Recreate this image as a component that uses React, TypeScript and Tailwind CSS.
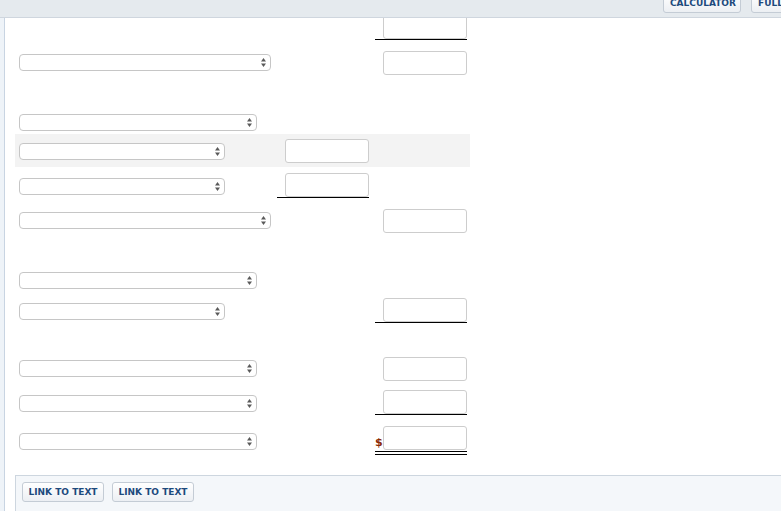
const font = { fontFamily: '"DejaVu Sans", Verdana, sans-serif' }

function Arrows() {
    return (
        <svg width="5" height="9" viewBox="0 0 5 9" className="shrink-0">
            <polygon points="2.5,0 5,3.5 0,3.5" fill="#5a5a5a" />
            <polygon points="0,5.5 5,5.5 2.5,9" fill="#5a5a5a" />
        </svg>
    )
}

function Select({ w, mt }: { w: string; mt: string }) {
    return (
        <div className={`${w} ${mt} h-[17px] flex items-center justify-end pr-[4px] bg-white border border-[#c6c6c6] rounded-[4px]`}>
            <Arrows />
        </div>
    )
}

function Field() {
    return <input type="text" className="w-[84px] h-[24px] bg-white border border-[#cdcdcd] rounded-[3px]" />
}

type Cell = "none" | "plain" | "line" | "total"

function Amount({ kind }: { kind: Cell }) {
    if (kind === "none") return <div className="w-[92px]" />
    if (kind === "plain")
        return (
            <div className="w-[92px] flex justify-end">
                <Field />
            </div>
        )
    if (kind === "line")
        return (
            <div className="w-[92px] flex justify-end border-b border-black">
                <Field />
            </div>
        )
    return (
        <div className="w-[92px] flex flex-col">
            <div className="flex items-end justify-between">
                <span className="text-[11px] leading-[12px] font-bold text-[#8a2a05] mb-[1px]" style={font}>$</span>
                <Field />
            </div>
            <div className="mt-[1px] h-[4px] border-y border-black" />
        </div>
    )
}

function Row({
    sel,
    selMt = "mt-0",
    mid = "none",
    right = "none",
    className = "",
}: {
    sel?: string
    selMt?: string
    mid?: Cell
    right?: Cell
    className?: string
}) {
    return (
        <div className={`flex items-start pl-[4px] ${className}`}>
            <div className="w-[258px]">{sel && <Select w={sel} mt={selMt} />}</div>
            <Amount kind={mid} />
            <div className="w-[6px]" />
            <Amount kind={right} />
        </div>
    )
}

function LinkButton({ label }: { label: string }) {
    return (
        <button
            className="w-[82px] h-[20px] shrink-0 flex items-center justify-center whitespace-nowrap rounded-[3px] border border-[#c4ccd5] bg-gradient-to-b from-white to-[#eceff3] text-[9px] font-bold text-[#1d4a7d] leading-none"
            style={font}
        >
            {label}
        </button>
    )
}

function ToolButton({ label, w }: { label: string; w: string }) {
    return (
        <button
            className={`${w} h-[20px] shrink-0 flex items-end justify-start pl-[6px] pb-[4px] whitespace-nowrap rounded-[3px] border border-[#c4ccd5] bg-gradient-to-b from-white to-[#eceff3] text-[9px] font-bold text-[#1d4a7d] leading-[9px]`}
            style={font}
        >
            {label}
        </button>
    )
}

export default function App() {
    return (
        <div className="w-[781px] h-[511px] overflow-hidden bg-white flex flex-col">
            {/* Toolbar, scrolled so only the lower half shows */}
            <div className="h-[18px] shrink-0 bg-[#e5eaee] border-b border-[#cfd6de] flex items-end gap-[10px] pl-[663px] pb-[4px] overflow-hidden">
                <ToolButton label="CALCULATOR" w="w-[78px]" />
                <ToolButton label="FULL SCREEN" w="w-[90px]" />
            </div>

            <div className="flex flex-1 min-h-0">
                <div className="w-[5px] shrink-0 bg-[#eef3f8] border-r border-[#c8d4e2]" />

                <div className="flex-1 flex flex-col overflow-hidden">
                    <div className="flex flex-col w-[465px] pl-[10px]">
                        <Row className="-mt-[3px] h-[25px]" right="line" />
                        <Row className="mt-[11px] h-[24px]" sel="w-[252px]" selMt="mt-[3px]" right="plain" />
                        <Row className="mt-[39px] h-[17px]" sel="w-[238px]" />
                        <Row className="mt-[3px] h-[33px] pt-[5px] bg-[#f3f3f3]" sel="w-[206px]" selMt="mt-[4px]" mid="plain" />
                        <Row className="mt-[6px] h-[25px]" sel="w-[206px]" selMt="mt-[5px]" mid="line" />
                        <Row className="mt-[11px] h-[24px]" sel="w-[252px]" selMt="mt-[3px]" right="plain" />
                        <Row className="mt-[39px] h-[17px]" sel="w-[238px]" />
                        <Row className="mt-[9px] h-[25px]" sel="w-[206px]" selMt="mt-[5px]" right="line" />
                        <Row className="mt-[34px] h-[24px]" sel="w-[238px]" selMt="mt-[3px]" right="plain" />
                        <Row className="mt-[9px] h-[25px]" sel="w-[238px]" selMt="mt-[5px]" right="line" />
                        <Row className="mt-[11px] h-[29px]" sel="w-[238px]" selMt="mt-[7px]" right="total" />
                    </div>

                    {/* Footer actions */}
                    <div className="mt-[20px] ml-[10px] flex-1 bg-[#f4f7fa] border-t border-l border-[#cdd6df] flex items-start gap-[8px] pt-[6px] pl-[6px]">
                        <LinkButton label="LINK TO TEXT" />
                        <LinkButton label="LINK TO TEXT" />
                    </div>
                </div>
            </div>
        </div>
    )
}
